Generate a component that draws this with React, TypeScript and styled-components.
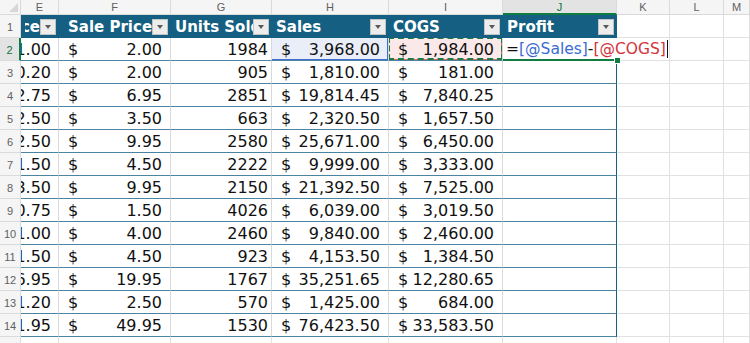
import styled, { createGlobalStyle } from "styled-components";

const GlobalStyle = createGlobalStyle`
  html, body {
    margin: 0;
    padding: 0;
    background: #ffffff;
    overflow: hidden;
  }
  body {
    font-family: "DejaVu Sans", "Liberation Sans", sans-serif;
  }
`;

const Sheet = styled.div`
  display: grid;
  grid-template-columns: 21px 38px 112px 101px 117px 114px 114px 53px 54px 1fr;
  grid-template-rows: 15px repeat(15, 23px);
  width: 750px;
  height: 343px;
  overflow: hidden;
`;

const Corner = styled.div`
  box-sizing: border-box;
  background: #f5f5f5;
  border-right: 1px solid #dadada;
  border-bottom: 1px solid #dadada;
  display: flex;
  align-items: flex-end;
  justify-content: flex-end;
  padding: 0 2px 2px 0;

  &::after {
    content: "";
    border-left: 9px solid transparent;
    border-bottom: 9px solid #d6d6d6;
  }
`;

const ColHead = styled.div<{ $active?: boolean }>`
  box-sizing: border-box;
  display: flex;
  align-items: center;
  justify-content: center;
  background: ${(p) => (p.$active ? "#e3e3e3" : "#f5f5f5")};
  color: ${(p) => (p.$active ? "#0f7040" : "#5f5f5f")};
  border-right: 1px solid #dadada;
  border-bottom: ${(p) => (p.$active ? "2px solid #107c41" : "1px solid #dadada")};
  font: 11px "Liberation Sans", Arial, sans-serif;
`;

const RowHead = styled.div<{ $active?: boolean }>`
  box-sizing: border-box;
  display: flex;
  align-items: center;
  justify-content: center;
  padding-top: 2px;
  background: ${(p) => (p.$active ? "#e3e3e3" : "#f5f5f5")};
  color: ${(p) => (p.$active ? "#0f7040" : "#5f5f5f")};
  border-right: ${(p) => (p.$active ? "2px solid #107c41" : "1px solid #dadada")};
  border-bottom: 1px solid #dadada;
  font: 11px "Liberation Sans", Arial, sans-serif;
`;

const HeadCell = styled.div<{ $indent?: number }>`
  box-sizing: border-box;
  display: flex;
  align-items: center;
  overflow: hidden;
  white-space: nowrap;
  background: #156082;
  color: #ffffff;
  font: bold 15px "DejaVu Sans", sans-serif;
  padding: 1px 3px 0 ${(p) => p.$indent ?? 4}px;
`;

/* a clipped label keeps its tail visible, as when the column is scrolled off */
const HeadLabel = styled.span<{ $tail?: boolean }>`
  flex: 1 1 auto;
  min-width: 0;
  overflow: hidden;
  direction: ${(p) => (p.$tail ? "rtl" : "ltr")};
  text-align: left;
`;

const FilterButton = styled.span`
  flex: none;
  box-sizing: border-box;
  width: 16px;
  height: 16px;
  background: #ededed;
  border: 1px solid #c4c4c4;
  display: flex;
  align-items: center;
  justify-content: center;

  &::after {
    content: "";
    border-left: 3.5px solid transparent;
    border-right: 3.5px solid transparent;
    border-top: 4px solid #5a5a5a;
  }
`;

const Cell = styled.div<{ $kind?: "money" | "count" | "clip"; $edge?: boolean; $ref?: "sales" | "cogs" }>`
  position: relative;
  box-sizing: border-box;
  display: flex;
  align-items: center;
  justify-content: ${(p) => (p.$kind === "money" ? "space-between" : "flex-end")};
  overflow: hidden;
  white-space: nowrap;
  padding: 1px ${(p) => (p.$kind === "count" ? 3 : p.$kind === "clip" ? 7 : 8)}px 0 9px;
  background: ${(p) => (p.$ref === "sales" ? "#e9eef8" : p.$ref === "cogs" ? "#fbe9e9" : "#ffffff")};
  border-right: 1px solid ${(p) => (p.$edge ? "#156082" : "#d9d9d9")};
  border-bottom: 1px solid #4b84a2;
  color: #111111;
  font-size: 16px;
`;

const RefBox = styled.span<{ $ref: "sales" | "cogs" }>`
  position: absolute;
  inset: -1px 0 0 -1px;
  border: 1px solid ${(p) => (p.$ref === "sales" ? "#3f6fd1" : "#e06a6a")};
  pointer-events: none;
`;

const CopyMarquee = styled.span`
  position: absolute;
  inset: -1px -1px 0 -1px;
  border: 2px dashed #1d7a45;
  pointer-events: none;
`;

const Blank = styled.div`
  box-sizing: border-box;
  border-right: 1px solid #e1e1e1;
  border-bottom: 1px solid #e1e1e1;
`;

const ActiveCell = styled.div`
  position: relative;
  box-sizing: border-box;
  border-bottom: 2px solid #107c41;
`;

const Editor = styled.div`
  position: absolute;
  z-index: 2;
  left: 0;
  top: 0;
  width: 164px;
  height: 21px;
  box-sizing: border-box;
  padding: 1px 0 0 3px;
  display: flex;
  align-items: center;
  background: #ffffff;
  white-space: nowrap;
  font-size: 15.5px;
  color: #111111;
`;

const RefText = styled.span<{ $ref: "sales" | "cogs" }>`
  color: ${(p) => (p.$ref === "sales" ? "#3a6cd2" : "#d3343a")};
`;

const Caret = styled.span`
  width: 1px;
  height: 18px;
  margin-left: 1px;
  background: #111111;
`;

const Handle = styled.span`
  position: absolute;
  z-index: 3;
  right: -3px;
  bottom: -4px;
  width: 5px;
  height: 5px;
  background: #107c41;
  box-shadow: 0 0 0 1px #ffffff;
`;

type Row = [string, string, string, string, string];

const rows: Row[] = [
  ["1.00", "2.00", "1984", "3,968.00", "1,984.00"],
  ["0.20", "2.00", "905", "1,810.00", "181.00"],
  ["2.75", "6.95", "2851", "19,814.45", "7,840.25"],
  ["2.50", "3.50", "663", "2,320.50", "1,657.50"],
  ["2.50", "9.95", "2580", "25,671.00", "6,450.00"],
  ["1.50", "4.50", "2222", "9,999.00", "3,333.00"],
  ["3.50", "9.95", "2150", "21,392.50", "7,525.00"],
  ["0.75", "1.50", "4026", "6,039.00", "3,019.50"],
  ["1.00", "4.00", "2460", "9,840.00", "2,460.00"],
  ["1.50", "4.50", "923", "4,153.50", "1,384.50"],
  ["6.95", "19.95", "1767", "35,251.65", "12,280.65"],
  ["1.20", "2.50", "570", "1,425.00", "684.00"],
  ["1.95", "49.95", "1530", "76,423.50", "33,583.50"],
];

const letters = ["E", "F", "G", "H", "I", "J", "K", "L", "M"];

const headers = [
  { label: "Cost Price", tail: true },
  { label: "Sale Price", indent: 9 },
  { label: "Units Sold" },
  { label: "Sales" },
  { label: "COGS" },
  { label: "Profit" },
];

const Money = ({ value }: { value: string }) => (
  <>
    <span>$</span>
    <span>{value}</span>
  </>
);

export default function App() {
  return (
    <>
      <GlobalStyle />
      <Sheet>
        <Corner />
        {letters.map((l) => (
          <ColHead key={l} $active={l === "J"}>
            {l}
          </ColHead>
        ))}

        <RowHead>1</RowHead>
        {headers.map((h) => (
          <HeadCell key={h.label} $indent={h.indent}>
            <HeadLabel $tail={h.tail}>{h.label}</HeadLabel>
            <FilterButton />
          </HeadCell>
        ))}
        <Blank />
        <Blank />
        <Blank />

        {rows.map((r, i) => {
          const first = i === 0;
          return [
            <RowHead key={`h${i}`} $active={first}>
              {i + 2}
            </RowHead>,
            <Cell key={`e${i}`} $kind="clip">
              {r[0]}
            </Cell>,
            <Cell key={`f${i}`} $kind="money">
              <Money value={r[1]} />
            </Cell>,
            <Cell key={`g${i}`} $kind="count">
              {r[2]}
            </Cell>,
            <Cell key={`s${i}`} $kind="money" $ref={first ? "sales" : undefined}>
              <Money value={r[3]} />
              {first && <RefBox $ref="sales" />}
            </Cell>,
            <Cell key={`c${i}`} $kind="money" $ref={first ? "cogs" : undefined}>
              <Money value={r[4]} />
              {first && <RefBox $ref="cogs" />}
              {first && <CopyMarquee />}
            </Cell>,
            first ? (
              <ActiveCell key={`j${i}`}>
                <Editor>
                  =<RefText $ref="sales">[@Sales]</RefText>-<RefText $ref="cogs">[@COGS]</RefText>
                  <Caret />
                </Editor>
                <Handle />
              </ActiveCell>
            ) : (
              <Cell key={`j${i}`} $edge />
            ),
            <Blank key={`k${i}`} />,
            <Blank key={`l${i}`} />,
            <Blank key={`m${i}`} />,
          ];
        })}

        <RowHead>15</RowHead>
        {letters.map((l) => (
          <Blank key={`b${l}`} />
        ))}
      </Sheet>
    </>
  );
}
